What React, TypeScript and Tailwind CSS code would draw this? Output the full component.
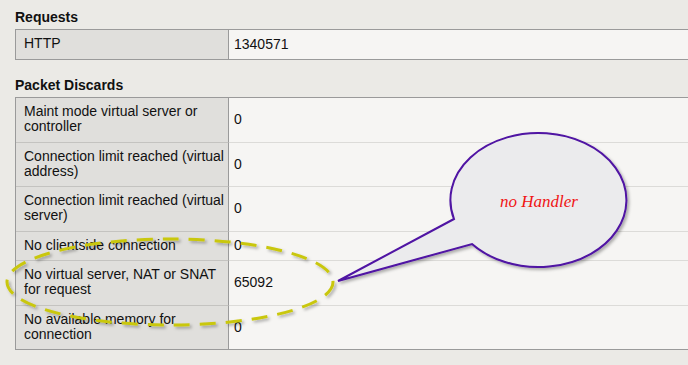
const requests = [{ label: "HTTP", value: "1340571" }];

const discards = [
  { label: "Maint mode virtual server or controller", value: "0" },
  { label: "Connection limit reached (virtual address)", value: "0" },
  { label: "Connection limit reached (virtual server)", value: "0" },
  { label: "No clientside connection", value: "0" },
  { label: "No virtual server, NAT or SNAT for request", value: "65092" },
  { label: "No available memory for connection", value: "0" },
];

type Row = { label: string; value: string };

function StatTable({ rows }: { rows: Row[] }) {
  return (
    <div className="ml-[15px] w-[680px] border border-[#9a9a9a]">
      {rows.map((row, i) => {
        const last = i === rows.length - 1;
        return (
          <div key={row.label} className="flex">
            <div
              className={`w-[213px] shrink-0 bg-[#e0dfdc] pl-2 pr-[2px] pt-[6px] pb-[7.5px] border-r border-[#9a9a9a] ${
                last ? "" : "border-b border-b-[#c4c3c0]"
              }`}
            >
              {row.label}
            </div>
            <div
              className={`flex-1 flex items-center bg-[#f6f5f3] pl-[5px] ${
                last ? "" : "border-b border-[#dcdbd8]"
              }`}
            >
              {row.value}
            </div>
          </div>
        );
      })}
    </div>
  );
}

export default function App() {
  return (
    <div className="relative w-[688px] h-[365px] overflow-hidden bg-[#ebeae6] text-[14px] leading-[15px] text-[#111] font-['Liberation_Sans',Arial,sans-serif]">
      <div className="pt-[10px]">
        <h2 className="pl-[15px] font-bold">Requests</h2>
        <div className="mt-[4px]">
          <StatTable rows={requests} />
        </div>
        <h2 className="pl-[15px] mt-[18.5px] font-bold">Packet Discards</h2>
        <div className="mt-[4px]">
          <StatTable rows={discards} />
        </div>
      </div>

      {/* annotation layer */}
      <svg
        className="absolute left-0 top-0 pointer-events-none"
        width="688"
        height="365"
        viewBox="0 0 688 365"
      >
        <defs>
          <filter id="sh" x="-20%" y="-20%" width="140%" height="140%">
            <feDropShadow dx="2" dy="2" stdDeviation="1.5" floodColor="#000" floodOpacity="0.3" />
          </filter>
        </defs>
        <ellipse
          cx="170"
          cy="282"
          rx="163"
          ry="43"
          fill="none"
          stroke="#c9c70c"
          strokeWidth="3"
          strokeDasharray="16 10"
          filter="url(#sh)"
        />
        <path
          d="M 454 219 L 338 281 L 472 244 A 88 67 0 1 0 454 219 Z"
          fill="#ebebed"
          stroke="#4f12a3"
          strokeWidth="2"
          strokeLinejoin="miter"
          filter="url(#sh)"
        />
        <text
          x="539"
          y="207"
          textAnchor="middle"
          fill="#f01414"
          fontSize="17"
          fontStyle="italic"
          fontFamily="'Liberation Serif', 'Times New Roman', serif"
        >
          no Handler
        </text>
      </svg>
    </div>
  );
}
